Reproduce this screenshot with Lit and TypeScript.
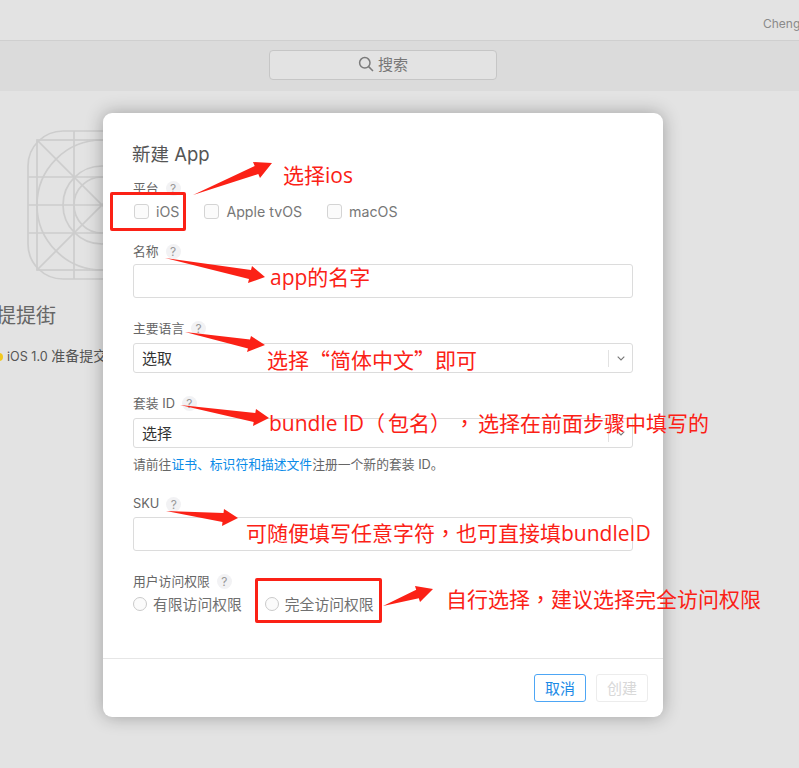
import { LitElement, html, css, svg } from "lit";
import { customElement } from "lit/decorators.js";

const arrows: string[] = [
  "193,195 254.7,165.9 253,162 272,163 260,178 258.3,174.1",
  "165,258 251,270.1 252,266 265,277 248,283 249,278.9",
  "185,332 250,339.6 251,336 265,345 247,352 248,348.4",
  "180,405 255.3,413.1 256,409 269,418 253,426 253.7,421.9",
  "166,511 223.5,513 224,509 238,518 222,526 222.5,522",
  "383,606 416.2,589.7 415,586 433,589 420,602 418.8,598.3",
];

const notes: { x: number; y: number; t: string }[] = [
  { x: 283, y: 160, t: "选择ios" },
  { x: 270, y: 262, t: "app的名字" },
  { x: 267, y: 344, t: "选择“简体中文”即可" },
  { x: 269, y: 407, t: "bundle ID（包名），选择在前面步骤中填写的" },
  { x: 246, y: 517, t: "可随便填写任意字符，也可直接填bundleID" },
  { x: 446, y: 583, t: "自行选择，建议选择完全访问权限" },
];

@customElement("app-root")
export class AppRoot extends LitElement {
  static styles = css`
    :host {
      display: block;
      position: relative;
      width: 799px;
      height: 768px;
      overflow: hidden;
      background: #e3e3e3;
      font-family: "Inter", "Noto Sans CJK SC", sans-serif;
      color: #666;
    }
    .top {
      height: 40px;
      border-bottom: 1px solid #cfcfcf;
      display: flex;
      justify-content: flex-end;
      align-items: center;
    }
    .user {
      width: 36px;
      font-size: 12px;
      color: #8a8a8a;
      padding-top: 7px;
      white-space: nowrap;
    }
    .bar {
      height: 50px;
      background: #dbdbdb;
      display: flex;
      justify-content: center;
      align-items: flex-start;
      padding-top: 9px;
      box-sizing: border-box;
    }
    .search {
      width: 228px;
      height: 30px;
      box-sizing: border-box;
      margin-right: 33px;
      padding-bottom: 2px;
      border: 1px solid #c6c6c6;
      border-radius: 4px;
      background: #e3e3e3;
      display: flex;
      justify-content: center;
      align-items: center;
      gap: 4px;
      font-size: 15px;
      color: #777;
    }
    .search svg {
      display: block;
    }
    .t {
      margin-bottom: 2px;
    }
    .bg {
      padding: 39px 0 0 27px;
    }
    .bg svg {
      display: block;
    }
    .bg-name {
      margin: 22px 0 0 -31px;
      font-size: 20px;
      line-height: 28px;
      color: #666;
    }
    .bg-status {
      margin: 17px 0 0 -27px;
      display: flex;
      align-items: center;
      gap: 4px;
      font-size: 12.6px;
      line-height: 18px;
      color: #555;
      white-space: nowrap;
    }
    .bg-cjk {
      font-size: 14px;
    }
    .dot {
      width: 8px;
      height: 8px;
      margin-left: -5px;
      border-radius: 50%;
      background: #f2c81e;
    }
    .dialog {
      position: absolute;
      left: 103px;
      top: 113px;
      width: 560px;
      height: 604px;
      box-sizing: border-box;
      background: #fff;
      border-radius: 9px;
      box-shadow: 0 0 18px rgba(0, 0, 0, 0.3);
      display: flex;
      flex-direction: column;
    }
    .body {
      flex: 1;
      padding: 30px 30px 0;
      display: flex;
      flex-direction: column;
      gap: 21px;
    }
    .title {
      font-size: 18.5px;
      line-height: 22px;
      color: #555;
      margin: 0 0 -7px -1px;
    }
    .first {
      margin-bottom: 1px;
    }
    .label {
      display: flex;
      align-items: center;
      gap: 7px;
      height: 18px;
      font-size: 12.8px;
      color: #666;
    }
    .q {
      width: 15px;
      height: 15px;
      margin-top: 1px;
      border-radius: 50%;
      background: #f2f2f4;
      color: #999;
      font-size: 12px;
      display: flex;
      align-items: center;
      justify-content: center;
    }
    .checks {
      display: flex;
      gap: 25px;
      margin-top: 5px;
      height: 18px;
      align-items: center;
      font-size: 14.2px;
      color: #777;
    }
    .check {
      display: flex;
      align-items: center;
      gap: 7px;
      margin-left: 1px;
    }
    .check + .check {
      margin-left: 0;
    }
    .box {
      width: 15px;
      height: 15px;
      box-sizing: border-box;
      border: 1.5px solid #d4d4d4;
      border-radius: 3px;
      background: #fbfbfb;
    }
    .input {
      height: 34px;
      box-sizing: border-box;
      margin-top: 4px;
      border: 1px solid #dcdcdc;
      border-radius: 3px;
      background: #fff;
    }
    .select {
      height: 30px;
      box-sizing: border-box;
      margin-top: 6px;
      border: 1px solid #dcdcdc;
      border-radius: 3px;
      display: flex;
      align-items: center;
      justify-content: space-between;
      padding-left: 8px;
      font-size: 15px;
      color: #333;
    }
    .caret {
      width: 23px;
      height: 17px;
      border-left: 1px solid #e2e2e2;
      display: flex;
      align-items: center;
      justify-content: center;
    }
    .help {
      margin-top: 8px;
      height: 18px;
      line-height: 18px;
      font-size: 12.8px;
      color: #666;
    }
    .help a {
      color: #0a8be8;
      text-decoration: none;
    }
    .radios {
      display: flex;
      align-items: center;
      gap: 23px;
      height: 18px;
      margin-top: 5px;
      font-size: 14.8px;
      color: #707070;
    }
    .radio {
      display: flex;
      align-items: center;
      gap: 6px;
    }
    .circle {
      width: 14px;
      height: 14px;
      box-sizing: border-box;
      border: 1.5px solid #cacaca;
      border-radius: 50%;
      background: #fbfbfb;
    }
    .foot {
      height: 59px;
      box-sizing: border-box;
      border-top: 1px solid #e6e6e6;
      padding: 15px 15px 0 0;
      display: flex;
      justify-content: flex-end;
      gap: 10px;
    }
    .btn {
      width: 52px;
      height: 28px;
      box-sizing: border-box;
      border-radius: 3px;
      font-size: 15px;
      display: flex;
      align-items: center;
      justify-content: center;
    }
    .cancel {
      border: 1px solid #4da6f5;
      color: #1c8ae6;
    }
    .create {
      border: 1px solid #ececec;
      color: #d8d8d8;
    }
    .marks {
      position: absolute;
      left: 0;
      top: 0;
      display: block;
      pointer-events: none;
    }
    .frame {
      position: absolute;
      box-sizing: border-box;
      border: 3px solid #fb2116;
      border-radius: 2px;
    }
    .f1 {
      left: 110px;
      top: 192px;
      width: 76px;
      height: 39px;
    }
    .f2 {
      left: 255px;
      top: 578px;
      width: 127px;
      height: 45px;
    }
    .note {
      position: absolute;
      font-family: "Open Sans", "Noto Sans CJK SC", sans-serif;
      font-size: 21px;
      line-height: 30px;
      color: #fb2116;
      white-space: nowrap;
    }
    .quote {
      font-family: "Noto Sans CJK SC", sans-serif;
    }
    .comma {
      font-family: "Noto Sans CJK TC", sans-serif;
    }
    .paren {
      display: inline-block;
      width: 24px;
      font-family: "Noto Sans CJK SC", sans-serif;
    }
    .close-comma {
      display: inline-block;
      width: 24px;
      font-family: "Noto Sans CJK TC", sans-serif;
    }
  `;

  private bgIcon() {
    return html`<svg width="150" height="150" viewBox="0 0 150 150" fill="none" stroke="#cdcdcd" stroke-width="1.7">
      ${svg`
        <rect x="1" y="1" width="148" height="148" rx="35" />
        <rect x="10" y="10" width="130" height="130" />
        <path d="M47 1V149M103 1V149M1 47H149M1 75H149M1 103H149M10 10L140 140M140 10L10 140" />
        <circle cx="75" cy="75" r="65" />
        <circle cx="75" cy="75" r="39" />
        <circle cx="75" cy="75" r="28" />
      `}
    </svg>`;
  }

  private label(text: string) {
    return html`<div class="label"><span class="t">${text}</span><span class="q">?</span></div>`;
  }

  private select(text: string) {
    return html`<div class="select">
      <span class="t">${text}</span>
      <span class="caret">
        <svg width="8" height="5" viewBox="0 0 8 5" fill="none" stroke="#777" stroke-width="1.1">
          <path d="M.7.7L4 4 7.3.7" />
        </svg>
      </span>
    </div>`;
  }

  private noteText(text: string) {
    return text.split(/(），|[（，“”])/).map((part) => {
      if (part === "），")
        return html`<span class="paren">）</span><span class="close-comma">，</span>`;
      if (part === "（") return html`<span class="paren">（</span>`;
      if (part === "，") return html`<span class="comma">，</span>`;
      if (part === "“" || part === "”") return html`<span class="quote">${part}</span>`;
      return part;
    });
  }

  render() {
    return html`
      <div class="top"><span class="user">Cheng</span></div>
      <div class="bar">
        <div class="search">
          <svg width="16" height="16" viewBox="0 0 16 16" fill="none" stroke="#7b7b7b" stroke-width="1.5">
            <circle cx="6.8" cy="6.8" r="5.2" />
            <path d="M10.6 10.6L15 15" />
          </svg>
          <span class="t">搜索</span>
        </div>
      </div>
      <div class="bg">
        ${this.bgIcon()}
        <div class="bg-name">提提街</div>
        <div class="bg-status">
          <span class="dot"></span><span>iOS 1.0 <span class="bg-cjk">准备提交</span></span>
        </div>
      </div>

      <div class="dialog">
        <div class="body">
          <div class="title">新建 App</div>
          <div class="first">
            ${this.label("平台")}
            <div class="checks">
              <span class="check"><span class="box"></span>iOS</span>
              <span class="check"><span class="box"></span>Apple tvOS</span>
              <span class="check"><span class="box"></span>macOS</span>
            </div>
          </div>
          <div>${this.label("名称")}<div class="input"></div></div>
          <div>${this.label("主要语言")}${this.select("选取")}</div>
          <div>
            ${this.label("套装 ID")}${this.select("选择")}
            <div class="help">请前往<a>证书、标识符和描述文件</a>注册一个新的套装 ID。</div>
          </div>
          <div>${this.label("SKU")}<div class="input"></div></div>
          <div>
            ${this.label("用户访问权限")}
            <div class="radios">
              <span class="radio"><span class="circle"></span><span class="t">有限访问权限</span></span>
              <span class="radio"><span class="circle"></span><span class="t">完全访问权限</span></span>
            </div>
          </div>
        </div>
        <div class="foot">
          <span class="btn cancel"><span class="t">取消</span></span>
          <span class="btn create"><span class="t">创建</span></span>
        </div>
      </div>

      <svg class="marks" width="799" height="768" viewBox="0 0 799 768" fill="#fb2116">
        ${arrows.map((p) => svg`<polygon points=${p} />`)}
      </svg>
      <div class="frame f1"></div>
      <div class="frame f2"></div>
      ${notes.map(
        (n) => html`<span class="note" style="left:${n.x}px;top:${n.y}px">${this.noteText(n.t)}</span>`
      )}
    `;
  }
}
